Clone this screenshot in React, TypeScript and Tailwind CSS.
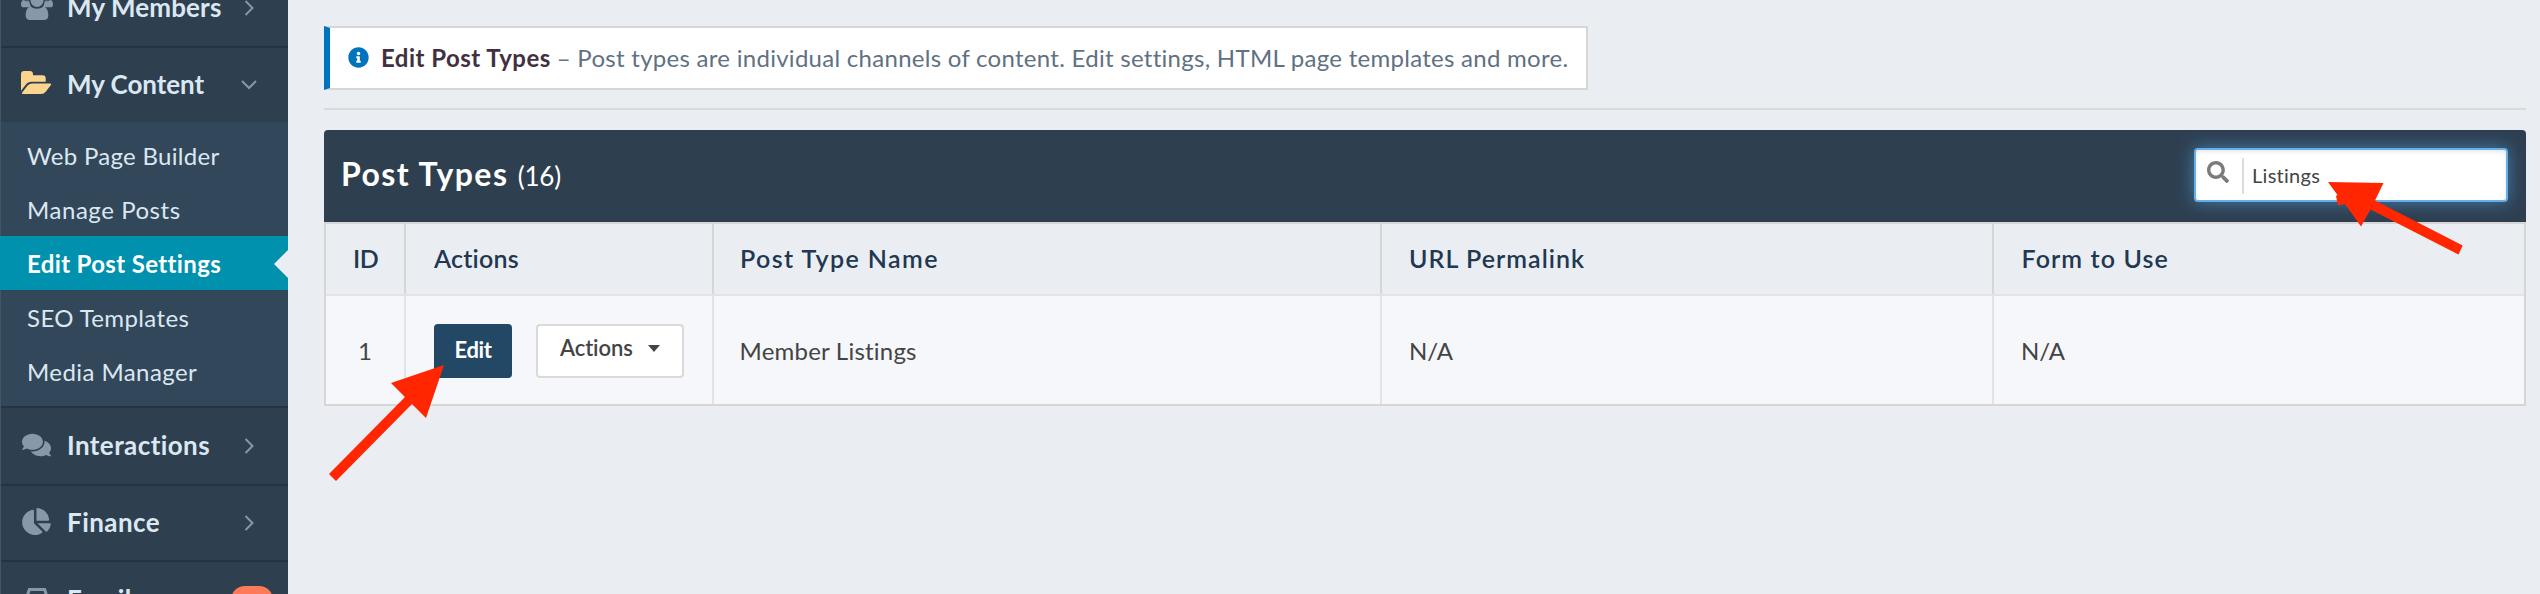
import type { ReactNode } from "react";
import { FaChartPie, FaComments, FaInfoCircle, FaSearch } from "react-icons/fa";

interface SubItem {
  label: string;
  tracking: string;
  active?: boolean;
}

const contentItems: SubItem[] = [
  { label: "Web Page Builder", tracking: "tracking-[0.3px]" },
  { label: "Manage Posts", tracking: "tracking-[0.55px]" },
  { label: "Edit Post Settings", tracking: "tracking-[0.35px]", active: true },
  { label: "SEO Templates", tracking: "tracking-[0.38px]" },
  { label: "Media Manager", tracking: "tracking-[0.42px]" },
];

const columns = [
  { label: "ID", className: "pl-[27px] tracking-[-0.4px]" },
  { label: "Actions", className: "border-l-2 pl-7 tracking-[0.2px]" },
  { label: "Post Type Name", className: "border-l-2 pl-[26px] tracking-[1.4px]" },
  { label: "URL Permalink", className: "border-l-2 pl-[27px] tracking-[1.05px]" },
  { label: "Form to Use", className: "border-l-2 pl-[27.5px] tracking-[1.1px]" },
];

function UsersIcon() {
  return (
    <svg width="32" height="30" viewBox="0 0 32 30" fill="currentColor">
      <circle cx="6.500" cy="6" r="4.500" />
      <circle cx="25.500" cy="6" r="4.500" />
      <path d="M0 14.500C0 12 1 10 3 10c1.200 1 3.500 1.600 5.300 1C8.500 14 9.500 16 10.500 17.300H3C1 17.300 0 16.500 0 14.500z" />
      <path d="M32 14.500C32 12 31 10 29 10c-1.200 1-3.500 1.600-5.300 1-.2 3-1.200 5-2.200 6.300H29c2 0 3-.8 3-2.800z" />
      <circle cx="16" cy="10.500" r="6.500" />
      <path d="M4.700 25.500c0-4.500 1.500-8.700 5.300-8.700 1.500 1.200 3.500 2 6 2s4.500-.8 6-2c3.800 0 5.300 4.200 5.300 8.700 0 2.900-1.500 4.500-4.300 4.500H9c-2.800 0-4.300-1.600-4.300-4.500z" />
    </svg>
  );
}

function FolderIcon() {
  return (
    <svg width="31" height="23" viewBox="0 0 31 23" fill="#fbd58e">
      <path d="M0 19.700V3.200Q0 0 3.200 0h5.600Q12 0 12 3.200v1h9.500q3.200 0 3.200 3.200v3.300H10.500Q7 10.700 4.500 14z" />
      <path d="M10.800 12.400h18.400q1.600 0 .7 1.500l-5 6.600Q22.900 23 20 23H1.800q-1.500 0-.6-1.500l5-6.600q1.900-2.500 4.600-2.500z" />
    </svg>
  );
}

function InboxIcon() {
  return (
    <svg width="28" height="24" viewBox="0 0 28 24" fill="none" stroke="currentColor" strokeWidth="3">
      <path d="M2 15 6.300 1.500h15.400L26 15v7.500H2z" />
    </svg>
  );
}

function Chevron({ open = false }: { open?: boolean }) {
  return (
    <svg width="16" height="16" viewBox="0 0 16 16" fill="none" stroke="#8597a8" strokeWidth="2">
      {open ? <path d="m1 4 7 7 7-7" /> : <path d="m4.500 1 7 7-7 7" />}
    </svg>
  );
}

interface MenuRowProps {
  icon: ReactNode;
  label: string;
  tracking: string;
  className?: string;
  right?: ReactNode;
}

function MenuRow({ icon, label, tracking, className = "", right }: MenuRowProps) {
  return (
    <div className={`flex shrink-0 items-center bg-[#2e3f50] pl-5 ${className}`}>
      <span className="flex w-[31px] justify-center text-[#8799a9]">{icon}</span>
      <span className={`ml-[15px] flex-1 pb-px text-[26px] font-bold text-[#dbe7f1] ${tracking}`}>
        {label}
      </span>
      {right ?? <span className="mr-[31px]"><Chevron /></span>}
    </div>
  );
}

function Sidebar() {
  return (
    <aside className="-mt-[30px] flex w-[288px] shrink-0 flex-col border-l border-[#435465] bg-[#33475b]">
      <MenuRow icon={<span className="-mt-[6px]"><UsersIcon /></span>} label="My Members" tracking="tracking-[0.12px]" className="h-[76px]" />
      <MenuRow
        icon={<span className="-mt-[5px]"><FolderIcon /></span>}
        label="My Content"
        tracking="tracking-[-0.05px]"
        className="h-[76px] border-t-2 border-[#253342]"
        right={<span className="mr-[31px]"><Chevron open /></span>}
      />
      <ul className="pt-[6px] pb-[8px]">
        {contentItems.map((item) => (
          <li
            key={item.label}
            className={`relative -ml-px flex h-[54px] items-center pt-px pl-[27px] text-2xl ${item.tracking} ${
              item.active ? "bg-[#0091ae] font-bold text-white" : "text-[#dbe7f1]"
            }`}
          >
            {item.label}
            {item.active && (
              <svg className="absolute right-0 top-[14px]" width="14" height="28" viewBox="0 0 14 28">
                <path d="M14 0v28L0 14z" fill="#eaeef3" />
              </svg>
            )}
          </li>
        ))}
      </ul>
      <MenuRow icon={<FaComments className="-mt-[3px] h-[26px] w-[29px]" />} label="Interactions" tracking="tracking-[0.42px]" className="h-[78px] border-t-2 border-[#253342]" />
      <MenuRow icon={<FaChartPie className="-mt-[4px] h-[27px] w-[29px]" />} label="Finance" tracking="tracking-[0.45px]" className="h-[76px] border-t-2 border-[#253342]" />
      <MenuRow
        icon={<InboxIcon />}
        label="Email"
        tracking="tracking-[0.4px]"
        className="h-[78px] border-t-2 border-[#253342]"
        right={<span className="mr-[15px] h-7 w-[42px] rounded-full bg-[#ff7a59]" />}
      />
    </aside>
  );
}

function Banner() {
  return (
    <div className="flex h-16 w-[1264px] items-center border-2 border-l-[6px] border-[#d6d6d6] border-l-[#0073bf] bg-white pl-[18px] text-2xl whitespace-nowrap">
      <FaInfoCircle className="-mt-px size-[21px] text-[#0073bf]" />
      <p className="ml-[12px] pb-px text-[#5f7182]">
        <strong className="font-bold tracking-[0.48px] text-[#42303f]">Edit Post Types</strong>
        <span className="ml-[6px] tracking-[0.28px]">
          – Post types are individual channels of content. Edit settings, HTML page templates and more.
        </span>
      </p>
    </div>
  );
}

function SearchBox() {
  return (
    <div className="-mt-[2px] flex h-[54px] w-[314px] items-center rounded-[4px] border-2 border-[#66afe9] bg-white shadow-[inset_0_2px_4px_rgba(0,0,0,0.09),0_0_18px_rgba(82,168,236,0.6)]">
      <FaSearch className="-mt-[6px] ml-[11px] size-[22px] text-[#7b7b7b]" />
      <span className="mt-[2px] ml-[13px] h-9 w-[2px] bg-[#dcdcdc]" />
      <span className="ml-[8px] text-xl tracking-[0.28px] text-[#444]">Listings</span>
    </div>
  );
}

function PostTypesTable() {
  return (
    <section>
      <div className="flex h-[92px] items-center justify-between rounded-t-[4px] bg-[#2e3f50] pr-[18px] pl-[17px]">
        <h1 className="pb-[3px] text-[32px] leading-10 font-bold tracking-[1.45px] text-white">
          Post Types <span className="text-[26px] font-normal tracking-[-0.2px]">(16)</span>
        </h1>
        <SearchBox />
      </div>
      <div className="border-2 border-[#d6d6d6]">
        <div className="grid h-[70px] grid-cols-[78px_308px_668px_612px_532px]">
          {columns.map((col) => (
            <div
              key={col.label}
              className={`flex items-center border-[#d6d6d6] text-[25px] font-semibold text-[#213850] ${col.className}`}
            >
              {col.label}
            </div>
          ))}
        </div>
        <div className="grid h-[110px] grid-cols-[78px_308px_668px_612px_532px] border-t-2 border-[#e3e3e3] bg-[#f5f7fb] text-2xl text-[#444]">
          <div className="flex items-center justify-center pt-[2px]">1</div>
          <div className="flex items-center gap-6 border-l-2 border-[#e3e3e3] pt-[2px] pl-7">
            <button className="h-[54px] w-[78px] rounded-[4px] bg-[#234866] pb-[3px] text-[22px] font-bold tracking-[-0.4px] text-white">
              Edit
            </button>
            <button className="flex h-[54px] w-[148px] items-center rounded-[4px] border-2 border-[#dadada] bg-white pb-[6px] pl-[22px] text-[22px] font-semibold tracking-[-0.1px]">
              Actions
              <svg className="ml-[15px]" width="12" height="7" viewBox="0 0 12 7">
                <path d="M0 0h12L6 7z" fill="#444" />
              </svg>
            </button>
          </div>
          <div className="flex items-center border-l-2 border-[#e3e3e3] pt-[2px] pl-[25.5px] tracking-[0.22px]">Member Listings</div>
          <div className="flex items-center border-l-2 border-[#e3e3e3] pt-[2px] pl-[27px]">N/A</div>
          <div className="flex items-center border-l-2 border-[#e3e3e3] pt-[2px] pl-[27px]">N/A</div>
        </div>
      </div>
    </section>
  );
}

// Red pointer arrows that sit on top of the page
function Arrows() {
  return (
    <svg className="pointer-events-none absolute inset-0" width="2540" height="594" viewBox="0 0 2540 594" fill="#ff2600">
      <path d="M444 365 391 383l14 14-76 77 7 7 76-77 14 14z" />
      <path d="M2328 182 2383.500 183 2375 200.500 2462.700 245.500 2458.500 254.500 2370.500 209.500 2361 226.500 2345 204 2338 205.500 2336 196 2337.500 195z" />
    </svg>
  );
}

export default function App() {
  return (
    <div className="relative flex h-[594px] w-[2540px] overflow-hidden bg-[#eaeef3] font-['Lato',sans-serif]">
      <Sidebar />
      <main className="flex-1 pt-[26px] pr-[14px] pl-9">
        <Banner />
        <hr className="my-[18px] border-t-2 border-[#d9dadc]" />
        <div className="pt-[2px]">
          <PostTypesTable />
        </div>
      </main>
      <Arrows />
    </div>
  );
}
